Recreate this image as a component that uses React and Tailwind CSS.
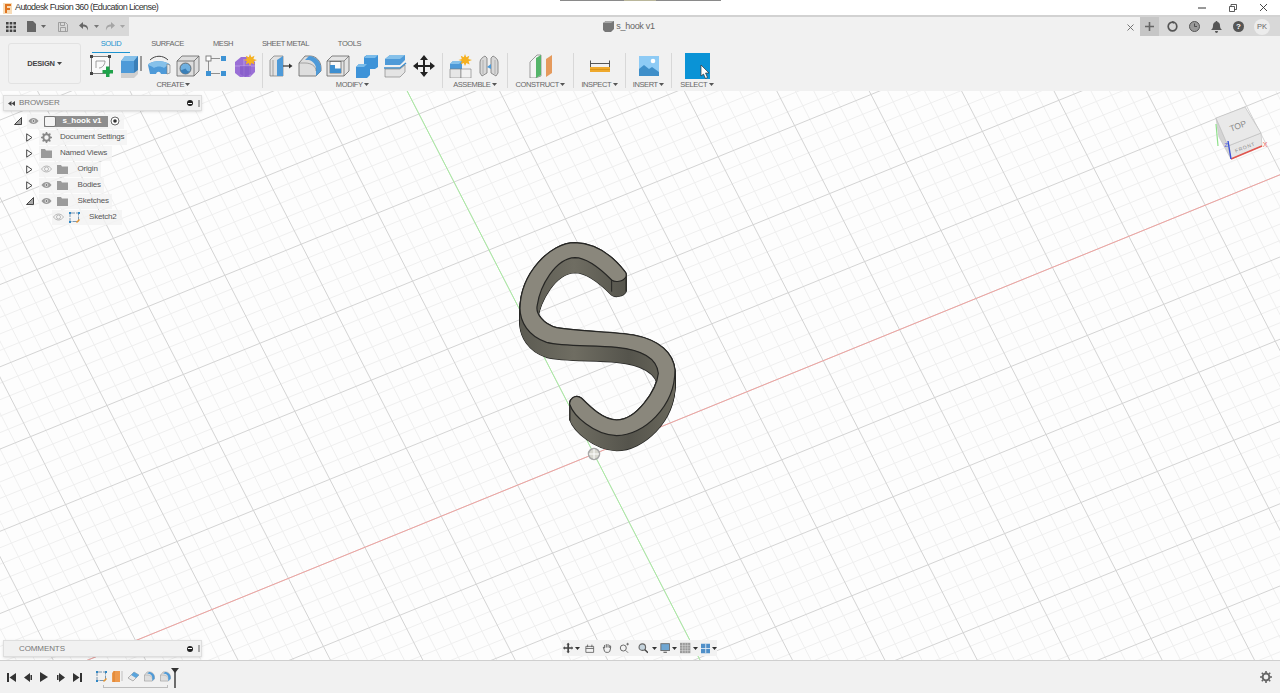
import React from "react";

const R = [76.4, -31.1];
const G = [35, 68];
const O = [594, 454];
const pt = (a, b) => [O[0] + a * R[0] + b * G[0], O[1] + a * R[1] + b * G[1]];
function gridPaths() {
  let minor = "";
  let major = "";
  const n = 18;
  for (let i = -n * 5; i <= n * 5; i++) {
    const k = i / 5;
    const a1 = pt(k, -n), a2 = pt(k, n), b1 = pt(-n, k), b2 = pt(n, k);
    const s = `M${a1[0].toFixed(1)} ${a1[1].toFixed(1)}L${a2[0].toFixed(1)} ${a2[1].toFixed(1)}M${b1[0].toFixed(1)} ${b1[1].toFixed(1)}L${b2[0].toFixed(1)} ${b2[1].toFixed(1)}`;
    if (i % 5 === 0) major += s;
    else minor += s;
  }
  return { minor, major };
}
const grid = gridPaths();

const HOOK =
  "M375 125C340 80 290 40 225 38C150 38 62 130 60 235C60 275 85 320 140 337C190 350 280 345 350 352C410 358 470 375 475 430C470 480 410 570 350 570C310 570 270 530 245 505C225 490 205 510 210 525C220 555 280 615 350 617C430 617 525 530 525 420C520 370 480 330 400 315C340 305 240 305 170 293C130 283 105 250 112 225C120 170 165 85 225 83C265 83 310 125 335 150C345 158 370 155 378 140C380 132 378 128 375 125Z";
const sweep = Array.from({ length: 16 }, (_, i) => (15 - i) * 3);

function Viewport() {
  return (
    <svg className="absolute inset-0 w-full h-full" viewBox="0 91 1280 569">
      <defs>
        <linearGradient id="side" gradientUnits="userSpaceOnUse" x1="60" y1="0" x2="525" y2="0">
          <stop offset="0" stopColor="#5c5b52" />
          <stop offset="0.35" stopColor="#6f6d62" />
          <stop offset="0.7" stopColor="#55544c" />
          <stop offset="1" stopColor="#6a685c" />
        </linearGradient>
      </defs>
      <rect x="0" y="91" width="1280" height="569" fill="#fdfdfd" />
      <path d={grid.minor} stroke="#efefef" strokeWidth="1" fill="none" />
      <path d={grid.major} stroke="#d4d4d4" strokeWidth="1" fill="none" />
      <path d={`M${pt(0, -8).join(" ")}L${pt(0, 8).join(" ")}`} stroke="#a8eda0" strokeWidth="1" />
      <path d={`M${pt(-12, 0).join(" ")}L${pt(12, 0).join(" ")}`} stroke="#f0a3a0" strokeWidth="1" />
      <circle cx="594" cy="454" r="5.5" fill="#d8d8d0" stroke="#a8a8a8" strokeWidth="1.5" />
      <path d="M589 454h10M594 449v10" stroke="#fff" strokeWidth="1" />
      <g transform="translate(500 230) scale(0.3333)">
        {sweep.map((d) => (
          <path key={d} d={HOOK} transform={`translate(0 ${d})`} fill="#2a2a28" stroke="#2a2a28" strokeWidth="4" />
        ))}
        {sweep.map((d) => (
          <path key={`f${d}`} d={HOOK} transform={`translate(0 ${d})`} fill="url(#side)" />
        ))}
        <path d={HOOK} fill="#8a877c" stroke="#262624" strokeWidth="3.5" strokeLinejoin="round" />
        <path d="M335 150V185M378 140V185M210 525V572" stroke="#262624" strokeWidth="3" fill="none" />
      </g>
      <g>
        <polygon points="1228,146 1261,133 1262,146 1231,159" fill="#e6e6e6" stroke="#c4c4c4" strokeWidth="0.7" />
        <polygon points="1216,118 1228,146 1231,159 1219,137" fill="#d4d4d4" stroke="#c4c4c4" strokeWidth="0.7" />
        <polygon points="1216,118 1245,107 1261,133 1228,146" fill="#e9e9e9" stroke="#bdbdbd" strokeWidth="0.7" />
        <text x="1238" y="129" textAnchor="middle" fontSize="8.5" fill="#8a8a8a" fontFamily="Liberation Sans, sans-serif" transform="rotate(-20 1238 126)">TOP</text>
        <text x="1245" y="149" textAnchor="middle" fontSize="5" letterSpacing="0.8" fill="#8a8a8a" fontFamily="Liberation Sans, sans-serif" transform="rotate(-21 1245 147)">FRONT</text>
        <path d="M1231 159L1262 146" stroke="#e0564f" strokeWidth="1.6" />
        <path d="M1231 159L1228 141" stroke="#3a4fd8" strokeWidth="1.4" />
        <path d="M1218 146L1216 124" stroke="#8ee08a" strokeWidth="1.2" />
        <text x="1265" y="147" textAnchor="middle" fontSize="7" fill="#ee6a64" fontFamily="Liberation Sans, sans-serif">X</text>
        <text x="1226" y="147" textAnchor="middle" fontSize="6" fill="#5568dd" fontFamily="Liberation Sans, sans-serif">Z</text>
      </g>
    </svg>
  );
}

const Svg = ({ w = 24, h = 24, vb = "0 0 24 24", children }) => (
  <svg width={w} height={h} viewBox={vb} className="block shrink-0">{children}</svg>
);

const SketchIcon = () => (
  <Svg>
    <rect x="1.5" y="2.500" width="18" height="17" fill="#fafafa" stroke="#666" strokeWidth="0.8" />
    <path d="M6 7h9M6 7v7M15 7c0 4-3 7-6 7" fill="none" stroke="#888" strokeWidth="0.8" />
    <path d="M0 1h3v3H0zM18 1h3v3h-3zM0 18h3v3H0z" fill="#444" />
    <path d="M16 12.500h3.500v3.500H23v3.500h-3.500V23H16v-3.500h-3.500V16H16z" fill="#1fa24a" />
  </Svg>
);
const ExtrudeIcon = () => (
  <Svg>
    <polygon points="2,7 6,2 19,2 19,18 15,21 2,21" fill="#4e9ad8" />
    <polygon points="2,7 6,2 19,2 15,7" fill="#86c1ea" />
    <polygon points="15,7 19,2 19,17 15,21" fill="#3a7fb8" />
    <polygon points="2,19 15,19 19,16 19,20 15,24 2,24" fill="#cfcfcf" />
    <path d="M22 2v15" stroke="#444" strokeWidth="1" />
  </Svg>
);
const RevolveIcon = () => (
  <Svg>
    <path d="M1 11c3-5 18-5 22 0l-3 9h-6c-1-3-4-3-5 0H3z" fill="#4e9ad8" />
    <path d="M1 11c3-5 18-5 22 0-4 1-5 2-6 3-3-2-7-2-10 0-1-1-3-2-6-3z" fill="#86c1ea" />
    <path d="M3 6c5-5 13-5 18 0" fill="none" stroke="#444" strokeWidth="1" />
    <path d="M20 10l3 1v8l-3 1z" fill="#e8e8e8" stroke="#777" strokeWidth="0.6" />
  </Svg>
);
const HoleIcon = () => (
  <Svg>
    <polygon points="1,7 6,2 23,2 23,17 18,22 1,22" fill="#dedede" stroke="#666" strokeWidth="0.8" />
    <path d="M1 7h17l5-5M18 7v15" fill="none" stroke="#666" strokeWidth="0.8" />
    <circle cx="9.500" cy="14.500" r="5.500" fill="#6fb0e0" stroke="#555" strokeWidth="0.8" />
    <path d="M9.500 14.500a5 5 0 0 0 4 3 5 5 0 0 1-9-1z" fill="#3a7fb8" />
  </Svg>
);
const PatternIcon = () => (
  <Svg>
    <rect x="2" y="2" width="5" height="5" fill="#fff" stroke="#777" strokeWidth="0.9" />
    <path d="M7 4.500h9M4.500 7v10M7 19.500h9" stroke="#777" strokeWidth="0.8" />
    <rect x="17" y="2" width="5" height="5" fill="#3e93d4" />
    <rect x="2" y="17" width="5" height="5" fill="#3e93d4" />
    <rect x="17" y="17" width="5" height="5" fill="#3e93d4" />
  </Svg>
);
const FormIcon = () => (
  <Svg>
    <path d="M2 8l6-5h9l5 5v10l-5 5H7l-5-4z" fill="#9a6fd6" />
    <path d="M2 12h20M11 5v18M17 5v18" stroke="#c1a3ea" strokeWidth="0.8" />
    <path d="M7 12v8l5 3 6-3v-8z" fill="#7f55c4" opacity="0.6" />
    <path d="M17 0l1.400 3.200L21.500 1.800 20.400 5 24 6l-3.400 1.300 1 3.200-3.200-1.500L17 12l-1.200-3-3 1.300 1-3.200L10.500 6l3.300-1-1-3.200 3 1.400z" fill="#f5b120" />
  </Svg>
);
const PressPullIcon = () => (
  <Svg>
    <polygon points="1,6 5,2 14,2 14,22 1,22" fill="#e2e2e2" stroke="#777" strokeWidth="0.7" />
    <polygon points="8,6 14,2 14,22 8,22" fill="#4e9ad8" />
    <path d="M4 6v16" stroke="#777" strokeWidth="0.6" />
    <path d="M14 12h7" stroke="#333" strokeWidth="1.2" />
    <polygon points="20,9.500 23.500,12 20,14.500" fill="#333" />
  </Svg>
);
const FilletIcon = ({ s = 24 }) => (
  <Svg w={s} h={s}>
    <path d="M1 22V9l6-7h5c6 0 11 5 11 12v3l-5 5z" fill="#dedede" stroke="#666" strokeWidth="0.8" />
    <path d="M11 2c6 0 12 5 12 12v3l-5 5v-8c0-3-3-7-7-8l-4 0z" fill="#4e9ad8" />
    <path d="M1 9h6c6 0 11 3 11 8" fill="none" stroke="#666" strokeWidth="0.5" />
  </Svg>
);
const ShellIcon = () => (
  <Svg>
    <polygon points="1,7 6,2 23,2 23,17 18,22 1,22" fill="#e4e4e4" stroke="#666" strokeWidth="0.8" />
    <rect x="4" y="7.500" width="11" height="11.500" fill="#fafafa" stroke="#555" strokeWidth="0.7" />
    <polygon points="4,19 4,11 9,11 9,14.500 15,14.500 15,19" fill="#3e8fd0" />
    <path d="M1 7h17l5-5M18 7v15" fill="none" stroke="#666" strokeWidth="0.7" />
  </Svg>
);
const CombineIcon = () => (
  <Svg>
    <polygon points="1,13 4,10 9,10 9,3 12,1 23,1 23,13 20,15 15,15 15,21 12,24 1,24" fill="#3e93d8" />
    <polygon points="9,4 12,1 23,1 20,4" fill="#7bbcea" />
    <polygon points="1,13 4,10 12,10 9,13" fill="#7bbcea" />
  </Svg>
);
const SplitIcon = () => (
  <Svg>
    <polygon points="2,5 7,1 22,1 22,6 17,11 2,11" fill="#4e9ad8" />
    <polygon points="2,5 7,1 22,1 17,5" fill="#86c1ea" />
    <path d="M1 14h16l6-5" fill="none" stroke="#3a8ccc" strokeWidth="1.4" />
    <polygon points="2,15 17,15 22,11 22,18 17,23 2,23" fill="#e4e4e4" stroke="#777" strokeWidth="0.6" />
  </Svg>
);
const MoveIcon = () => (
  <Svg>
    <path d="M12 1l4 5h-3v5h5V8l5 4-5 4v-3h-5v5h3l-4 5-4-5h3v-5H6v3l-5-4 5-4v3h5V6H8z" fill="#222" />
  </Svg>
);
const NewCompIcon = () => (
  <Svg>
    <polygon points="1,10 4,7 13,7 13,15 1,15" fill="#4e9ad8" />
    <polygon points="1,10 4,7 13,7 10,10" fill="#86c1ea" />
    <polygon points="1,15 12,15 12,24 1,24" fill="#e6e6e6" stroke="#777" strokeWidth="0.6" />
    <polygon points="12,15 22,15 22,24 12,24" fill="#f2f2f2" stroke="#777" strokeWidth="0.6" />
    <path d="M16 0l1.300 3.300 3-1.500-1 3.200L23 6l-3.400 1.200 1 3.200-3.200-1.500L16 12l-1.200-3-3 1.300 1-3.200L9.500 6l3.300-1-1-3.200 3 1.400z" fill="#f5b120" />
  </Svg>
);
const JointIcon = () => (
  <Svg>
    <path d="M3 8c0-3 3-5 5-6l2 2v15l-5 3-2-3z" fill="#d8d8d8" stroke="#777" strokeWidth="0.8" />
    <path d="M21 8c0-3-3-5-5-6l-2 2v15l5 3 2-3z" fill="#d8d8d8" stroke="#777" strokeWidth="0.8" />
    <path d="M10 13l4-3v5z" fill="#4e9ad8" />
    <path d="M6 6v14M18 6v14" stroke="#999" strokeWidth="0.6" />
  </Svg>
);
const ConstructIcon = () => (
  <Svg>
    <polygon points="1,8 8,1 12,1 12,22 6,24 1,24" fill="#f4f4f4" stroke="#777" strokeWidth="0.7" />
    <polygon points="7,4 12,1 12,21 7,24" fill="#55b56a" />
    <polygon points="17,5 23,1 23,19 17,23" fill="#e59a5c" />
  </Svg>
);
const InspectIcon = () => (
  <Svg>
    <path d="M2.500 6.500v6.500M21.500 6.500v6.500M2.500 9.500h19" stroke="#444" strokeWidth="0.9" fill="none" />
    <rect x="2" y="13" width="20" height="5" fill="#efa92c" />
    <path d="M2 15.500h20" stroke="#d18b10" strokeWidth="0.7" />
  </Svg>
);
const InsertIcon = () => (
  <Svg>
    <rect x="2" y="2" width="20" height="20" fill="#8ecbf5" />
    <circle cx="16" cy="7" r="2.300" fill="#fff" />
    <path d="M2 22v-7l5-4 5 4 3-2 7 5v4z" fill="#3f8fc9" />
  </Svg>
);
const SelectIcon = () => (
  <div className="relative w-[25px] h-[26px] bg-[#0a93d6]">
    <svg width="10" height="14" viewBox="0 0 10 14" className="absolute left-[15px] top-[12px]">
      <path d="M1 0l8 8H5.500l2 4.500-2 1-2-4.500L1 11z" fill="#fff" stroke="#333" strokeWidth="0.7" />
    </svg>
  </div>
);

const Caret = ({ c = "#555" }) => (
  <svg width="5" height="3" viewBox="0 0 5 3" className="inline-block shrink-0"><path d="M0 0h5L2.500 3z" fill={c} /></svg>
);

function Cell({ children }) {
  return <div className="w-[28.6px] flex items-center justify-center">{children}</div>;
}

function Group({ label, width, border = true, children }) {
  return (
    <div className={`${width} h-[35px] flex flex-col items-center ${border ? "border-r border-[#d8d8d8]" : ""}`}>
      <div className="h-[25px] shrink-0 flex items-center">{children}</div>
      <div className="mt-[2px] shrink-0 flex items-center gap-[1.5px] text-[7.5px] tracking-[-0.4px] leading-[9px] text-[#666]">
        {label}
        <Caret />
      </div>
    </div>
  );
}

function Tab({ width, active, children }) {
  return (
    <div className={`${width} h-[16px] flex items-center justify-center text-[7.5px] tracking-[-0.4px] pb-[2px] ${active ? "text-[#1c93d0] border-b-[1.5px] border-[#1c93d0]" : "text-[#666]"}`}>
      {children}
    </div>
  );
}

function Toolbar() {
  return (
    <div className="h-[55px] bg-[#f1f1f1] flex">
      <div className="w-[88px] pl-2 pt-[7px]">
        <div className="w-[73px] h-[41px] rounded-[3px] border border-[#e2e2e2] flex items-center justify-center gap-[2px] text-[7.5px] tracking-[-0.2px] text-[#444] font-bold">
          DESIGN <Caret c="#444" />
        </div>
      </div>
      <div className="flex flex-col">
        <div className="flex pl-[4px] pt-[1px]">
          <Tab width="w-[38px]" active>SOLID</Tab>
          <Tab width="w-[75px]">SURFACE</Tab>
          <Tab width="w-[36px]">MESH</Tab>
          <Tab width="w-[89px]">SHEET METAL</Tab>
          <Tab width="w-[39px]">TOOLS</Tab>
        </div>
        <div className="flex">
          <Group label="CREATE" width="w-[175px] pr-[3px]">
            <Cell><SketchIcon /></Cell><Cell><ExtrudeIcon /></Cell><Cell><RevolveIcon /></Cell>
            <Cell><HoleIcon /></Cell><Cell><PatternIcon /></Cell><Cell><FormIcon /></Cell>
          </Group>
          <Group label="MODIFY" width="w-[180px]">
            <Cell><PressPullIcon /></Cell><Cell><FilletIcon /></Cell><Cell><ShellIcon /></Cell>
            <Cell><CombineIcon /></Cell><Cell><SplitIcon /></Cell><Cell><MoveIcon /></Cell>
          </Group>
          <Group label="ASSEMBLE" width="w-[65px]">
            <Cell><NewCompIcon /></Cell><Cell><JointIcon /></Cell>
          </Group>
          <Group label="CONSTRUCT" width="w-[66px]"><ConstructIcon /></Group>
          <Group label="INSPECT" width="w-[52px]"><InspectIcon /></Group>
          <Group label="INSERT" width="w-[46px]"><InsertIcon /></Group>
          <Group label="SELECT" width="w-[50px]" border={false}><SelectIcon /></Group>
        </div>
      </div>
    </div>
  );
}

function TitleBar() {
  return (
    <div className="relative h-[15px] bg-white flex items-center pl-[3px] text-[#333] text-[9px] tracking-[-0.6px]">
      <div className="absolute left-[560px] top-0 w-[161px] h-px bg-[#8a8a8a]">
        <div className="ml-[64px] w-[32px] h-px bg-[#b9b69a]" />
      </div>
      <svg width="9" height="11" viewBox="0 0 9 11" className="shrink-0 mt-[1px]">
        <rect width="9" height="11" fill="#f7dcb8" />
        <path d="M2 10V1h6v2H4v2h3v2H4v3z" fill="#e0741f" />
      </svg>
      <span className="ml-[3px]">Autodesk Fusion 360 (Education License)</span>
      <div className="ml-auto flex items-center">
        <svg width="8" height="2" viewBox="0 0 8 2" className="mr-[23px]"><path d="M0 1h8" stroke="#333" strokeWidth="1" /></svg>
        <svg width="8" height="8" viewBox="0 0 8 8" className="mr-[22px]"><path d="M.5 2.500h5v5h-5zM2 2.500V.5h5.500v5h-2" fill="none" stroke="#333" strokeWidth="0.8" /></svg>
        <svg width="9" height="9" viewBox="0 0 9 9" className="mr-[12px]"><path d="M1 1l7 7M8 1L1 8" stroke="#333" strokeWidth="0.9" /></svg>
      </div>
    </div>
  );
}

function TabStrip() {
  return (
    <div className="h-[21px] border-t-2 border-[#d2d2d2] flex bg-[#d8d8d8]">
      <div className="w-[129px] flex items-center pl-[6px]">
        <svg width="10" height="10" viewBox="0 0 10 10"><path d="M0 0h2.600v2.600H0zM3.700 0h2.600v2.600H3.700zM7.400 0H10v2.600H7.400zM0 3.700h2.600v2.600H0zM3.700 3.700h2.600v2.600H3.700zM7.400 3.700H10v2.600H7.400zM0 7.400h2.600V10H0zM3.700 7.400h2.600V10H3.700zM7.400 7.400H10V10H7.400z" fill="#444" /></svg>
        <svg width="9" height="11" viewBox="0 0 9 11" className="ml-[11px]"><path d="M0 0h6l3 3v8H0z" fill="#666" /></svg>
        <span className="ml-[5px] flex"><Caret c="#666" /></span>
        <svg width="10" height="10" viewBox="0 0 10 10" className="ml-[12px]"><path d="M.5.5h7l2 2v7H.5zM2.500.5v3h4v-3M2.500 9.500v-4h5v4" fill="none" stroke="#999" strokeWidth="0.9" /></svg>
        <svg width="10" height="9" viewBox="0 0 10 9" className="ml-[11px]"><path d="M4 0L0 3.500 4 7V4.500c3 0 4 1.500 5 4 .5-4-1.500-6-5-6z" fill="#666" /></svg>
        <span className="ml-[4.5px] flex"><Caret c="#777" /></span>
        <svg width="10" height="9" viewBox="0 0 10 9" className="ml-[6.5px]"><path d="M6 0l4 3.500L6 7V4.500c-3 0-4 1.500-5 4-.5-4 1.500-6 5-6z" fill="#a5a5a5" /></svg>
        <span className="ml-[4.5px] flex"><Caret c="#a5a5a5" /></span>
      </div>
      <div className="w-[1011px] bg-[#f1f1f1] relative flex items-center justify-center text-[9px] tracking-[-0.3px] text-[#666] pr-[123px] pl-[112px]">
        <svg width="11" height="11" viewBox="0 0 11 11" className="mr-[2px]"><path d="M0 2l3-2h8v8l-3 3H2L0 9z" fill="#777" /><path d="M0 2l3-2h8L8 2z" fill="#aaa" /></svg>
        s_hook v1
        <svg width="7" height="7" viewBox="0 0 7 7" className="absolute right-[6px] top-[7px]"><path d="M.5.5l6 6M6.500.5l-6 6" stroke="#666" strokeWidth="0.9" /></svg>
      </div>
      <div className="flex-1 flex items-center">
        <div className="w-[19px] h-full bg-[#c6c6c6] flex items-center justify-center">
          <svg width="9" height="9" viewBox="0 0 9 9"><path d="M4.500 0v9M0 4.500h9" stroke="#666" strokeWidth="1.6" /></svg>
        </div>
        <svg width="11" height="11" viewBox="0 0 11 11" className="ml-[8px]"><circle cx="5.500" cy="5.500" r="4.300" fill="none" stroke="#555" strokeWidth="1.700" /><path d="M5 0l3 1-2 2z" fill="#555" /></svg>
        <svg width="11" height="11" viewBox="0 0 11 11" className="ml-[11px]"><circle cx="5.500" cy="5.500" r="5" fill="#999" stroke="#555" strokeWidth="1" /><path d="M5.500 2.500v3h2.500" fill="none" stroke="#444" strokeWidth="0.900" /></svg>
        <svg width="11" height="12" viewBox="0 0 11 12" className="ml-[11px]"><path d="M5.500 0c.7 0 1 .5 1 1 2 .5 2.500 2 2.500 4 0 2 1 3 2 4H0c1-1 2-2 2-4 0-2 .5-3.500 2.500-4 0-.5.3-1 1-1zM4 10h3c0 1-.7 2-1.500 2S4 11 4 10z" fill="#555" /></svg>
        <span className="ml-[11px] w-[11px] h-[11px] rounded-full bg-[#555] text-white text-[8px] leading-[11px] text-center font-bold">?</span>
        <span className="ml-[10px] w-[16px] h-[16px] rounded-full bg-[#ececec] text-[#666] text-[7.500px] leading-[16px] text-center">PK</span>
      </div>
    </div>
  );
}

const Eye = ({ light }) => (
  <svg width="11" height="8" viewBox="0 0 11 8" className="shrink-0">
    {light ? (
      <g fill="none" stroke="#aaa" strokeWidth="0.800"><path d="M.5 4c2.500-4 7.500-4 10 0-2.500 4-7.500 4-10 0z" /><circle cx="5.500" cy="4" r="2" /></g>
    ) : (
      <g><path d="M.5 4c2.500-4 7.500-4 10 0-2.500 4-7.500 4-10 0z" fill="#999" /><circle cx="5.500" cy="4" r="1.800" fill="#eee" /><circle cx="5.500" cy="4" r="1" fill="#777" /></g>
    )}
  </svg>
);
const Folder = () => (
  <svg width="11" height="9" viewBox="0 0 11 9" className="shrink-0 block"><path d="M0 0h4l1 1.500h6V9H0z" fill="#9b9b9b" /></svg>
);
const Closed = () => (
  <svg width="7" height="9" viewBox="0 0 7 9" className="shrink-0"><path d="M.7.8l5.300 3.700L.7 8.200z" fill="#fff" stroke="#444" strokeWidth="1" /></svg>
);
const Open = () => (
  <svg width="8" height="8" viewBox="0 0 8 8" className="shrink-0"><path d="M.5 7.500L7.500.5v7z" fill="#aaa" stroke="#333" strokeWidth="0.900" /></svg>
);
const Gear = () => (
  <svg width="11" height="11" viewBox="0 0 11 11" className="shrink-0 block">
    <circle cx="5.500" cy="5.500" r="3.200" fill="none" stroke="#888" strokeWidth="2" />
    <path d="M5.500 0v11M0 5.500h11M1.600 1.600l7.800 7.800M9.400 1.600L1.600 9.400" stroke="#888" strokeWidth="1.500" strokeDasharray="2 7 2" />
  </svg>
);
const SketchSmall = ({ s = 11 }) => (
  <svg width={s} height={s} viewBox="0 0 11 11" className="shrink-0 block">
    <rect x="1" y="1" width="8.500" height="8.500" fill="none" stroke="#5a7fa0" strokeWidth="0.800" strokeDasharray="5 1" />
    <path d="M0 0h2v2H0zM9 0h2v2H9zM0 9h2v2H0z" fill="#2f87c4" />
    <path d="M7 10l3-3 1 1-3 3z" fill="#e9952e" />
  </svg>
);

function Row({ indent, tri, children, chip, label }) {
  return (
    <div className={`h-[16px] flex items-center ${indent}`}>
      {tri && <span className="w-[13px] flex">{tri}</span>}
      <div className={`h-[15px] flex items-center bg-[#f2f2f2]/80 text-[8px] tracking-[-0.2px] whitespace-nowrap text-[#555] ${chip}`}>
        {children}
        <span>{label}</span>
      </div>
    </div>
  );
}

function Browser() {
  return (
    <div className="absolute left-[3px] top-[4px] w-[199px]">
      <div className="h-[16px] bg-[#f1f1f1] border border-[#dedede] flex items-center pl-[4px] text-[8px] tracking-[-0.1px] text-[#777] shadow-sm">
        <svg width="7" height="5" viewBox="0 0 7 5"><path d="M3.500 0v5L0 2.500zM7 0v5L3.500 2.500z" fill="#444" /></svg>
        <span className="ml-[4px]">BROWSER</span>
        <span className="ml-auto w-[6px] h-[6px] rounded-full bg-[#222] flex items-center justify-center"><span className="w-[4px] h-px bg-white" /></span>
        <span className="ml-[5px] mr-[1px] w-[2px] h-[7px] border-x border-[#aaa]" />
      </div>
      <div className="mt-[2px]">
        <div className="h-[16px] flex items-center pl-[11px]">
          <Open />
          <div className="ml-[5px] h-[15px] w-[97px] flex items-center bg-[#f2f2f2]/80 pl-[0.5px]">
            <Eye />
            <div className="ml-[5.5px] w-[64px] h-[11px] flex items-center bg-[#8e8e8e]">
              <span className="w-[12px] h-[11px] bg-[#f4f4f4] border border-[#777] rounded-[2px]" />
              <span className="flex-1 text-center text-[8px] font-bold text-white whitespace-nowrap">s_hook v1</span>
            </div>
            <svg width="10" height="10" viewBox="0 0 10 10" className="ml-[2px]"><circle cx="5" cy="5" r="4" fill="#fff" stroke="#444" strokeWidth="0.800" /><circle cx="5" cy="5" r="1.800" fill="#333" /></svg>
          </div>
        </div>
        <Row indent="pl-[23px]" tri={<Closed />} chip="w-[88px] pl-[2px]" label="Document Settings"><span className="mr-[8px]"><Gear /></span></Row>
        <Row indent="pl-[23px]" tri={<Closed />} chip="w-[73px] pl-[2px]" label="Named Views"><span className="mr-[8px]"><Folder /></span></Row>
        <Row indent="pl-[23px]" tri={<Closed />} chip="w-[62px] pl-[2px]" label="Origin"><Eye light /><span className="ml-[5px] mr-[9.5px]"><Folder /></span></Row>
        <Row indent="pl-[23px]" tri={<Closed />} chip="w-[65px] pl-[2px]" label="Bodies"><Eye /><span className="ml-[5px] mr-[9.5px]"><Folder /></span></Row>
        <Row indent="pl-[23px]" tri={<Open />} chip="w-[73px] pl-[2px]" label="Sketches"><Eye /><span className="ml-[5px] mr-[9.5px]"><Folder /></span></Row>
        <Row indent="pl-[49px]" chip="w-[70px] pl-[1px]" label="Sketch2"><Eye light /><span className="ml-[5px] mr-[9px]"><SketchSmall /></span></Row>
      </div>
    </div>
  );
}

function NavBar() {
  return (
    <div className="absolute left-[562px] bottom-[4px] w-[155px] h-[16px] bg-[#f2f2f2] flex items-center pl-[1px] gap-[2px]">
      <svg width="12" height="12" viewBox="0 0 12 12"><path d="M6 0l2 2H7v3h3V4l2 2-2 2V7H7v3h1l-2 2-2-2h1V7H2v1L0 6l2-2v1h3V2H4z" fill="#444" /></svg>
      <Caret c="#333" />
      <svg width="11" height="11" viewBox="0 0 11 11" className="ml-[3px]"><path d="M1 3h9v7H1zM1 5.500h9M3 1v3M8 1v3" fill="none" stroke="#555" strokeWidth="0.900" /></svg>
      <svg width="12" height="12" viewBox="0 0 12 12" className="ml-[5px]"><path d="M3 6V2.500M5 5.500V1.500M7 5.500V1.500M9 6V2.500M3 6L1.500 5 3 10c1 1.500 5 1.500 6 0l1-4V3.500" fill="none" stroke="#555" strokeWidth="1" /></svg>
      <svg width="12" height="12" viewBox="0 0 12 12" className="ml-[5px]"><circle cx="5" cy="6" r="3.500" fill="none" stroke="#555" strokeWidth="1" /><path d="M8 9l2.500 2.500M10 0v3M8.500 1.500h3" stroke="#555" strokeWidth="0.900" /></svg>
      <svg width="12" height="12" viewBox="0 0 12 12" className="ml-[6px]"><circle cx="5" cy="5" r="3.800" fill="#c5d3dc" stroke="#666" strokeWidth="1.300" /><path d="M8 8l3.500 3.500" stroke="#444" strokeWidth="1.600" /></svg>
      <span className="ml-[2px] flex"><Caret c="#333" /></span>
      <svg width="12" height="12" viewBox="0 0 12 12" className="ml-[1px]"><rect x="1" y="1" width="10" height="8" fill="#6fa6d2" stroke="#666" strokeWidth="1" /><path d="M4 11h4" stroke="#666" strokeWidth="1.400" /></svg>
      <Caret c="#333" />
      <svg width="12" height="12" viewBox="0 0 12 12" className="ml-[1px]"><rect width="12" height="12" fill="#999" /><path d="M3 0v12M6 0v12M9 0v12M0 3h12M0 6h12M0 9h12" stroke="#dedede" strokeWidth="0.600" /></svg>
      <Caret c="#333" />
      <svg width="11" height="11" viewBox="0 0 11 11" className="ml-[1px]"><rect width="11" height="11" fill="#4f8fc8" /><path d="M5.500 0v11M0 5.500h11" stroke="#e6eef6" strokeWidth="1" /></svg>
      <Caret c="#333" />
    </div>
  );
}

function Comments() {
  return (
    <div className="absolute left-[3px] bottom-[3px] w-[199px] h-[17px] bg-[#f1f1f1] border border-[#dedede] flex items-center pl-[15px] text-[8px] tracking-[-0.1px] text-[#777] shadow-sm">
      COMMENTS
      <span className="ml-auto w-[6px] h-[6px] rounded-full bg-[#222] flex items-center justify-center"><span className="w-[4px] h-px bg-white" /></span>
      <span className="ml-[5px] mr-[1px] w-[2px] h-[7px] border-x border-[#aaa]" />
    </div>
  );
}

function Timeline() {
  return (
    <div className="h-[33px] bg-[#f1f1f1] border-t border-[#cfcfcf] flex items-center pl-[7px] relative">
      <svg width="9" height="9" viewBox="0 0 9 9"><path d="M0 0h2v9H0zM9 0v9L2.500 4.500z" fill="#333" /></svg>
      <svg width="8" height="9" viewBox="0 0 8 9" className="ml-[8px]"><path d="M6 0v9L0 4.500zM6.500 2H8v5H6.500z" fill="#333" /></svg>
      <svg width="8" height="10" viewBox="0 0 8 10" className="ml-[8px]"><path d="M0 0l8 5-8 5z" fill="#333" /></svg>
      <svg width="8" height="9" viewBox="0 0 8 9" className="ml-[9px]"><path d="M2 0v9l6-4.500zM0 2h1.500v5H0z" fill="#333" /></svg>
      <svg width="9" height="9" viewBox="0 0 9 9" className="ml-[8px]"><path d="M0 0v9l6.500-4.500zM7 0h2v9H7z" fill="#333" /></svg>
      <div className="ml-[14px] flex items-center gap-[5px] relative mb-[1px]">
        <SketchSmall />
        <svg width="11" height="11" viewBox="0 0 11 11"><path d="M0 2l2-2h6v11H0z" fill="#ee9a4d" /><path d="M9 0h2v10H9z" fill="#d8d8d8" /><path d="M2 0v11" stroke="#d87f2c" /></svg>
        <svg width="11" height="11" viewBox="0 0 11 11"><path d="M0 7l6-6 5 3-6 6z" fill="#e8e8e8" stroke="#777" strokeWidth="0.500" /><path d="M3 4l3-3 5 3-3 3z" fill="#5aa4dc" /></svg>
        <FilletIcon s={11} />
        <FilletIcon s={11} />
      </div>
      <div className="absolute left-[103px] top-[24px] w-[65px] h-[3px] border-x border-b border-[#bdbdbd]" />
      <svg width="9" height="22" viewBox="0 0 9 22" className="absolute left-[171px] top-[7px]">
        <path d="M0 0h8L4 5z" fill="#333" /><path d="M4 3v17" stroke="#333" strokeWidth="1.400" />
      </svg>
      <svg width="12" height="12" viewBox="0 0 12 12" className="ml-auto mr-[8px]">
        <circle cx="6" cy="6" r="3.400" fill="none" stroke="#666" strokeWidth="2" />
        <path d="M6 0v12M0 6h12M1.800 1.800l8.400 8.400M10.200 1.800l-8.400 8.400" stroke="#666" strokeWidth="1.600" strokeDasharray="2 8 2" />
      </svg>
    </div>
  );
}

export default function App() {
  return (
    <div className="w-[1280px] h-[693px] overflow-hidden flex flex-col bg-white font-['Liberation_Sans',sans-serif]">
      <TitleBar />
      <TabStrip />
      <Toolbar />
      <div className="relative flex-1">
        <Viewport />
        <Browser />
        <Comments />
        <NavBar />
      </div>
      <Timeline />
    </div>
  );
}
